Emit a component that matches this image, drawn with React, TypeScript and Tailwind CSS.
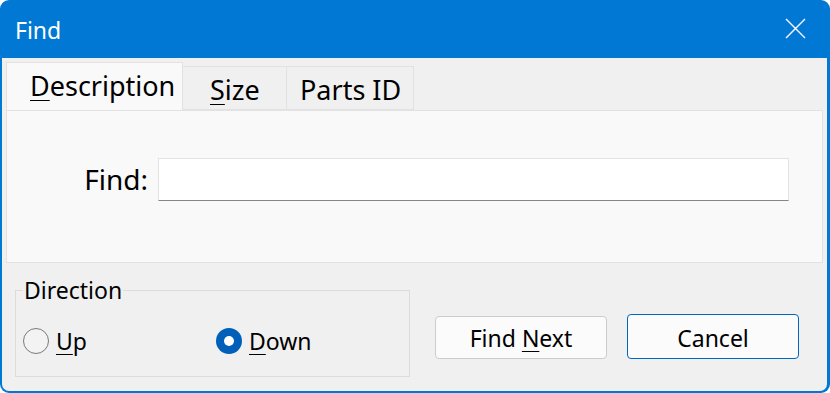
import React from "react";

const font = { fontFamily: '"Noto Sans", "Open Sans", sans-serif' };

function Mnemonic({ text }: { text: string }) {
  return <span className="underline decoration-1 underline-offset-[4px]">{text}</span>;
}

function Radio({ checked, children }: { checked?: boolean; children: React.ReactNode }) {
  return (
    <label className="flex items-center gap-[7px]">
      {checked ? (
        <span className="w-[26px] h-[26px] rounded-full bg-[#005fb8] flex items-center justify-center">
          <span className="w-[10px] h-[10px] rounded-full bg-white" />
        </span>
      ) : (
        <span className="w-[26px] h-[26px] rounded-full border-[1.5px] border-[#7a7a7a] bg-[#f3f3f3]" />
      )}
      <span className="text-[23px] text-black leading-none">{children}</span>
    </label>
  );
}

function Tabs() {
  return (
    <div className="flex items-end h-[48px] text-[27px] text-black leading-[34px]">
      <div className="w-[177px] h-[48px] bg-[#f9f9f9] border border-b-0 border-[#e2e2e2] pl-[23px] pt-[6px]">
        <Mnemonic text="D" />escription
      </div>
      <div className="w-[104px] h-[44px] bg-[#f0f0f0] border border-l-0 border-[#e2e2e2] pl-[27px] pt-[6px]">
        <Mnemonic text="S" />ize
      </div>
      <div className="w-[127px] h-[44px] bg-[#f0f0f0] border border-l-0 border-[#e2e2e2] pl-[13px] pt-[6px]">
        Parts ID
      </div>
    </div>
  );
}

export default function App() {
  return (
    <div className="w-[830px] h-[393px] bg-white" style={font}>
      <div className="w-[830px] h-[393px] rounded-[9px] bg-[#0078d4] flex flex-col overflow-hidden">
        <div className="h-[58px] shrink-0 flex items-center justify-between pl-[15px] pr-[24px]">
          <span className="text-white text-[23px] leading-none mt-[3px]">Find</span>
          <svg width="21" height="21" viewBox="0 0 21 21" className="-mt-[1px]">
            <path d="M1 1 L20 20 M20 1 L1 20" stroke="white" strokeWidth="1.4" />
          </svg>
        </div>
        <div className="flex-1 ml-[2px] mr-[3px] mb-[2px] bg-[#f0f0f0] rounded-b-[7px] px-[4px] pt-[4px] flex flex-col">
          <Tabs />
          <div className="h-[153px] bg-[#f9f9f9] border border-[#e2e2e2] flex items-start pt-[47px]">
            <div className="w-[151px] text-right text-[28px] text-black leading-[42px] pr-[10px]">Find:</div>
            <div className="w-[631px] h-[43px] bg-white border border-[#e3e3e3] border-b-[#868686]" />
          </div>
          <div className="flex items-start">
            <fieldset className="ml-[9px] mt-[15px] w-[395px] h-[99px] border border-[#dcdcdc] flex items-center gap-[129px] pl-[7px] pt-[4px]">
              <legend className="ml-0 px-[1px] text-[23px] text-black leading-[24px]">Direction</legend>
              <Radio>
                <Mnemonic text="U" />p
              </Radio>
              <Radio checked>
                <Mnemonic text="D" />own
              </Radio>
            </fieldset>
            <button className="ml-[25px] mt-[53px] w-[172px] h-[43px] rounded-[4px] border border-[#cccccc] bg-[#fbfbfb] text-[23px] text-black pt-[2px]">
              Find <Mnemonic text="N" />ext
            </button>
            <button className="ml-[20px] mt-[51px] w-[172px] h-[45px] rounded-[4px] border border-[#0067c0] bg-[#fbfbfb] text-[23px] text-black pt-[3px]">
              Cancel
            </button>
          </div>
        </div>
      </div>
    </div>
  );
}
